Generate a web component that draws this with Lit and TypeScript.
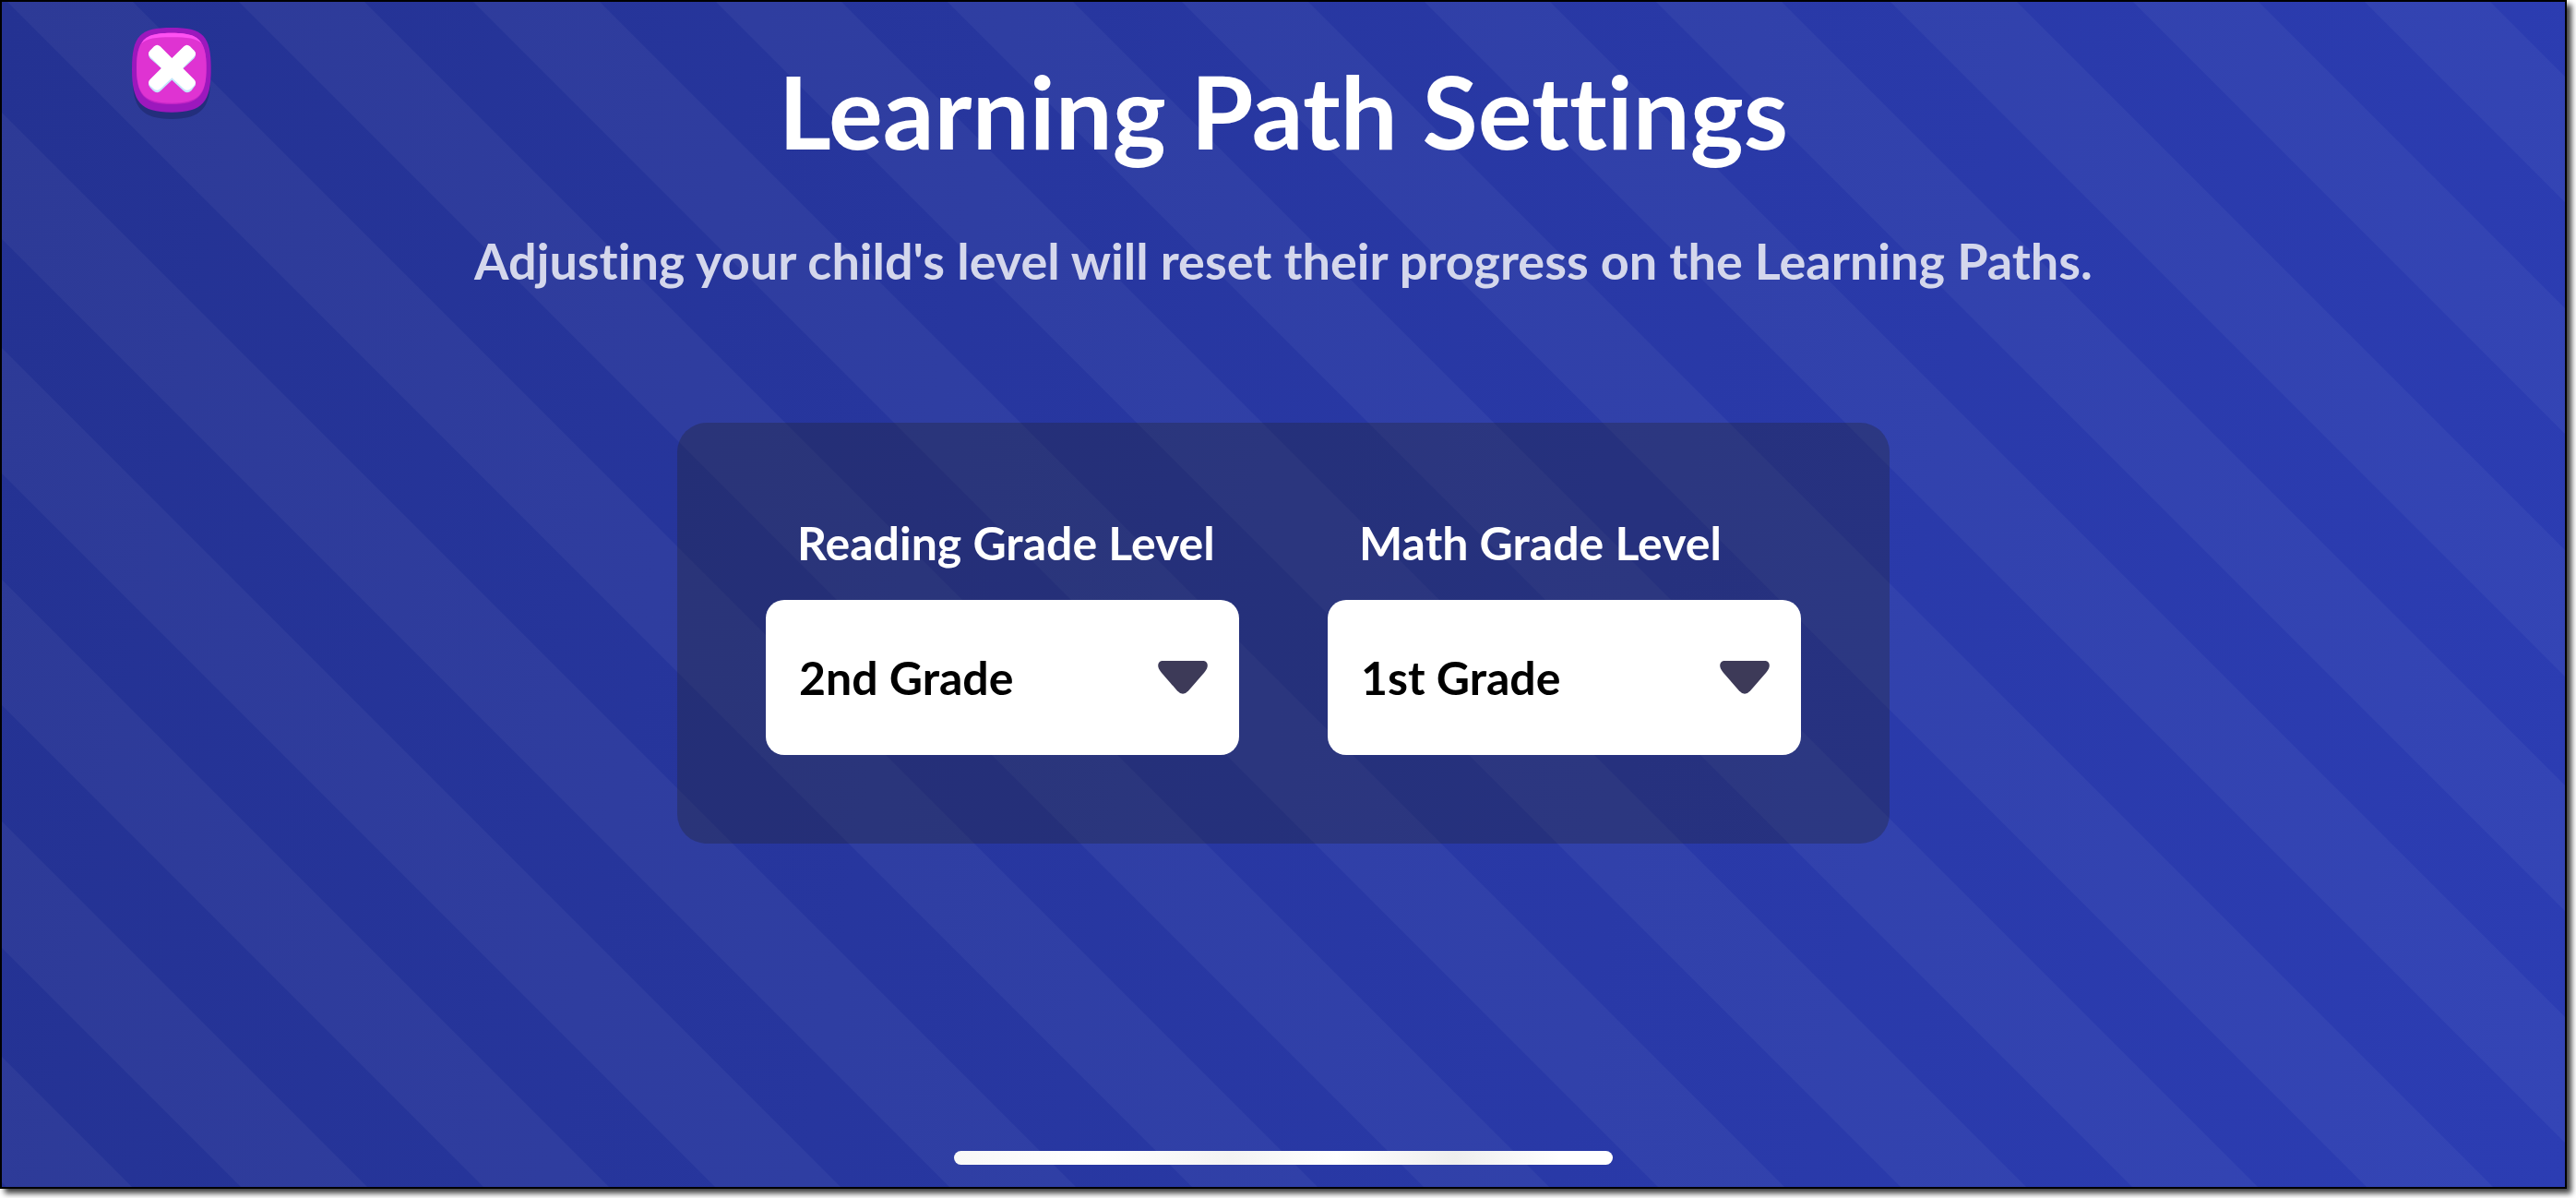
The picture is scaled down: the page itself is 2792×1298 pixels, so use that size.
import { LitElement, html, css, svg } from "lit";
import { customElement, property, state } from "lit/decorators.js";

const GRADES = ["Kindergarten", "1st Grade", "2nd Grade", "3rd Grade", "4th Grade", "5th Grade"];

@customElement("grade-select")
class GradeSelect extends LitElement {
  @property() label = "";
  @property() value = "";

  static styles = css`
    :host {
      display: flex;
      flex-direction: column;
      gap: 34px;
      flex: 1 1 0;
      min-width: 0;
    }
    .label {
      padding-left: 34px;
      font-size: 50px;
      font-weight: 700;
      line-height: 56px;
      color: #fff;
      white-space: nowrap;
    }
    .field {
      display: grid;
      align-items: center;
    }
    .select,
    .arrow {
      grid-area: 1 / 1;
    }
    .select {
      appearance: none;
      width: 100%;
      height: 168px;
      margin: 0;
      padding: 0 96px 0 36px;
      border: 0;
      border-radius: 20px;
      background: #fff;
      color: #000;
      font: inherit;
      font-size: 50px;
      font-weight: 700;
    }
    .arrow {
      justify-self: end;
      width: 54px;
      height: 36px;
      margin-right: 34px;
      pointer-events: none;
    }
  `;

  private onChange(e: Event) {
    this.value = (e.target as HTMLSelectElement).value;
    this.dispatchEvent(new CustomEvent("grade-change", { detail: this.value }));
  }

  render() {
    return html`
      <label class="label" for="grade">${this.label}</label>
      <div class="field">
        <select class="select" id="grade" @change=${this.onChange}>
          ${GRADES.map((g) => html`<option value=${g} ?selected=${g === this.value}>${g}</option>`)}
        </select>
        <svg class="arrow" viewBox="0 0 54 36" aria-hidden="true">
          <path
            fill="#3d3a58"
            d="M5 0H49C53 0 55 4 53 8.500Q52 10.500 50 13L33 32.500Q27 39 21 32.500L4 13Q2 10.500 1 8.500C-1 4 1 0 5 0Z"
          />
        </svg>
      </div>
    `;
  }
}

const closeIcon = svg`
  <path fill="#232e7c" d="M198 82C300 82 322 112 324 220C326 320 295 357 198 357C101 357 70 320 72 220C74 112 96 82 198 82Z" />
  <path fill="#9c18bd" d="M198 60C300 60 326 85 326 195C326 300 300 335 198 335C96 335 69 300 69 195C69 85 96 60 198 60Z" />
  <path fill="#c224c6" d="M198 77C285 77 311 100 311 192C311 282 285 309 198 309C110 309 84 282 84 192C84 100 110 77 198 77Z" />
  <path fill="#df33d2" d="M198 77C285 77 311 100 311 190C311 278 285 305 198 305C110 305 84 278 84 190C84 100 110 77 198 77Z" />
  <path fill="#ff50f2" d="M100 112C112 86 140 77 198 77C256 77 283 86 296 112C278 94 250 91 198 91C146 91 118 94 100 112Z" />
  <path
    fill="#c4e6fb"
    d="M141 127Q151 118 161 127L199 165L238 127Q248 118 258 127L271 134Q281 145 271 160L234 194L271 234Q281 243 271 253L262 265Q248 277 236 265L199 230L163 265Q151 277 138 265L128 254Q118 243 128 234L167 194L128 160Q118 145 128 134Z"
  />
  <path
    fill="#fff"
    d="M141 121Q151 112 161 121L199 159L238 121Q248 112 258 121L271 134Q281 144 271 154L234 191L271 228Q281 238 271 248L262 257Q248 269 236 257L199 223L163 257Q151 269 138 257L128 248Q118 238 128 228L165 191L128 154Q118 144 128 134Z"
  />
`;

@customElement("app-root")
class AppRoot extends LitElement {
  @state() private reading = "2nd Grade";
  @state() private math = "1st Grade";

  static styles = css`
    :host {
      display: block;
      box-sizing: border-box;
      min-height: 100vh;
      padding: 0 10px 10px 0;
      background: #fff;
      font-family: Lato, "Open Sans", sans-serif;
      font-variant-ligatures: none;
    }
    .screen {
      position: relative;
      box-sizing: border-box;
      display: flex;
      flex-direction: column;
      align-items: center;
      min-height: calc(100vh - 10px);
      border: 2px solid #000;
      background: linear-gradient(100deg, #243292, #2c3db3);
      box-shadow: 5px 5px 6px rgba(0, 0, 0, 0.75);
    }
    .stripes {
      position: absolute;
      inset: 0;
      width: 100%;
      height: 100%;
    }
    .header {
      position: relative;
      display: grid;
      grid-template-columns: 1fr auto 1fr;
      align-self: stretch;
      padding-top: 27px;
    }
    .close {
      justify-self: start;
      width: 88px;
      height: 101px;
      margin-left: 140px;
      padding: 0;
      border: 0;
      background: none;
      cursor: pointer;
    }
    .close-icon {
      display: block;
      width: 100%;
      height: 100%;
    }
    .title {
      margin: 26px 0 0;
      font-size: 110px;
      font-weight: 700;
      line-height: 128px;
      color: #fff;
    }
    .note {
      position: relative;
      margin: 68px 0 0;
      font-size: 54px;
      font-weight: 700;
      line-height: 64px;
      color: #d4d7ec;
    }
    .card {
      position: relative;
      box-sizing: border-box;
      display: flex;
      gap: 96px;
      width: 1314px;
      max-width: 100%;
      margin-top: 143px;
      padding: 102px 96px 96px;
      border-radius: 32px;
      background: rgba(34, 34, 34, 0.3);
    }
    .home {
      position: relative;
      width: 714px;
      height: 15px;
      margin-top: auto;
      margin-bottom: 24px;
      border-radius: 8px;
      background: linear-gradient(90deg, #f8f8f8, #fff 22%, #f3f3f3 42%, #fff 58%, #eee 76%, #fff 92%);
    }
  `;

  render() {
    return html`
      <main class="screen">
        <svg class="stripes" aria-hidden="true">
          <defs>
            <pattern
              id="stripe"
              width="768"
              height="64"
              patternUnits="userSpaceOnUse"
              patternTransform="skewX(45)"
            >
              <path d="M6 0H142V64H6ZM257 0H393V64H257ZM511 0H648V64H511Z" fill="#fff" fill-opacity="0.04" />
            </pattern>
          </defs>
          <rect width="100%" height="100%" fill="url(#stripe)" />
        </svg>
        <header class="header">
          <button class="close" aria-label="Close">
            <svg class="close-icon" viewBox="66 57 264 303" aria-hidden="true">${closeIcon}</svg>
          </button>
          <h1 class="title">Learning Path Settings</h1>
        </header>
        <p class="note">Adjusting your child's level will reset their progress on the Learning Paths.</p>
        <section class="card">
          <grade-select
            label="Reading Grade Level"
            .value=${this.reading}
            @grade-change=${(e: CustomEvent) => (this.reading = e.detail)}
          ></grade-select>
          <grade-select
            label="Math Grade Level"
            .value=${this.math}
            @grade-change=${(e: CustomEvent) => (this.math = e.detail)}
          ></grade-select>
        </section>
        <div class="home"></div>
      </main>
    `;
  }
}
